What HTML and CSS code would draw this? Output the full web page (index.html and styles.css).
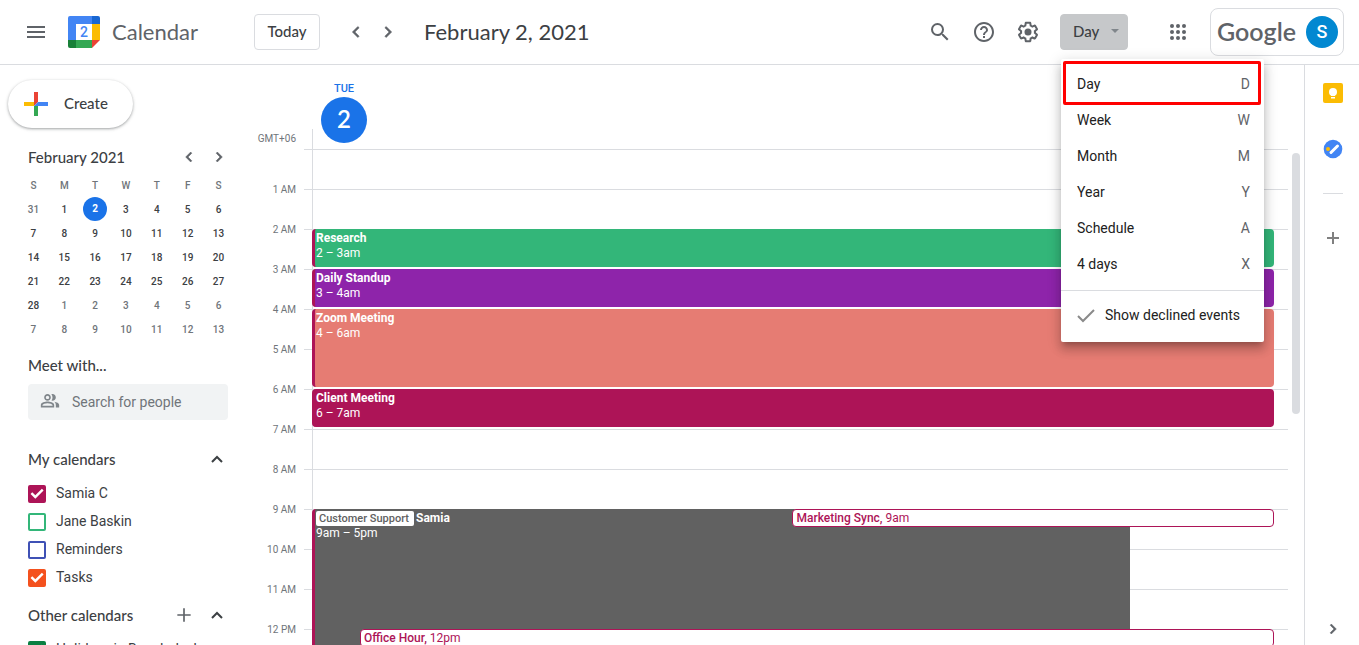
FILE: index.html
```html
<!DOCTYPE html>
<html lang="en">
<head>
    <meta charset="UTF-8">
    <meta name="viewport" content="width=device-width, initial-scale=1.0">
    <title>Calendar - February 2, 2021</title>
    <link rel="stylesheet" href="styles.css">
</head>
<body>
    <header class="topbar">
        <button class="icon-btn menu-btn" aria-label="Main menu">
            <svg width="24" height="24" viewBox="0 0 24 24"><path d="M3 18h18v-2H3v2zm0-5h18v-2H3v2zm0-7v2h18V6H3z"/></svg>
        </button>
        <a class="brand" href="#">
            <svg class="logo" width="32" height="32" viewBox="0 0 32 32">
                <rect x="7" y="7" width="18" height="18" fill="#fff"/>
                <path d="M2 0h22v8H8v16H0V2a2 2 0 0 1 2-2z" fill="#4285f4"/>
                <path d="M24 0h6a2 2 0 0 1 2 2v6h-8z" fill="#1967d2"/>
                <path d="M24 8h8v16h-8z" fill="#fbbc04"/>
                <path d="M8 24h16v8H8z" fill="#34a853"/>
                <path d="M0 24h8v8H2a2 2 0 0 1-2-2z" fill="#188038"/>
                <path d="M24 24h8l-8 8z" fill="#ea4335"/>
                <text class="logo-day" x="16" y="21" text-anchor="middle">2</text>
            </svg>
            <span class="brand-name">Calendar</span>
        </a>
        <button class="btn today-btn">Today</button>
        <div class="pager">
            <button class="icon-btn" aria-label="Previous day">
                <svg width="22" height="22" viewBox="0 0 24 24"><path d="M15.41 7.41 14 6l-6 6 6 6 1.41-1.41L10.83 12z" stroke="#5f6368" stroke-width=".6"/></svg>
            </button>
            <button class="icon-btn" aria-label="Next day">
                <svg width="22" height="22" viewBox="0 0 24 24"><path d="M10 6 8.59 7.41 13.17 12l-4.58 4.59L10 18l6-6z" stroke="#5f6368" stroke-width=".6"/></svg>
            </button>
        </div>
        <h1 class="date-title">February 2, 2021</h1>

        <div class="tools">
            <button class="icon-btn" aria-label="Search">
                <svg width="24" height="24" viewBox="0 0 24 24"><path d="M15.5 14h-.79l-.28-.27A6.47 6.47 0 0 0 16 9.5 6.5 6.5 0 1 0 9.5 16c1.61 0 3.09-.59 4.23-1.57l.27.28v.79l5 4.99L20.49 19l-4.99-5zm-6 0C7.01 14 5 11.99 5 9.5S7.01 5 9.5 5 14 7.01 14 9.5 11.99 14 9.5 14z"/></svg>
            </button>
            <button class="icon-btn" aria-label="Help">
                <svg width="24" height="24" viewBox="0 0 24 24"><path d="M11 18h2v-2h-2v2zm1-16C6.48 2 2 6.48 2 12s4.48 10 10 10 10-4.48 10-10S17.52 2 12 2zm0 18c-4.41 0-8-3.59-8-8s3.59-8 8-8 8 3.59 8 8-3.59 8-8 8zm0-14c-2.21 0-4 1.79-4 4h2c0-1.1.9-2 2-2s2 .9 2 2c0 2-3 1.75-3 5h2c0-2.25 3-2.5 3-5 0-2.21-1.79-4-4-4z"/></svg>
            </button>
            <button class="icon-btn" aria-label="Settings">
                <svg width="24" height="24" viewBox="0 0 24 24"><path d="M13.85 22.25h-3.7c-.74 0-1.36-.54-1.45-1.27l-.27-1.89c-.27-.14-.53-.29-.79-.46l-1.8.72c-.7.26-1.47-.03-1.81-.65L2.2 15.53c-.35-.66-.2-1.44.36-1.88l1.53-1.19c-.01-.15-.02-.3-.02-.46 0-.15.01-.31.02-.46l-1.52-1.19c-.59-.45-.74-1.26-.37-1.88l1.85-3.19c.34-.62 1.11-.9 1.79-.63l1.81.73c.26-.17.52-.32.78-.46l.27-1.91c.09-.7.71-1.25 1.44-1.25h3.7c.74 0 1.36.54 1.45 1.27l.27 1.89c.27.14.53.29.79.46l1.8-.72c.71-.26 1.48.03 1.82.65l1.84 3.18c.36.66.2 1.44-.36 1.88l-1.52 1.19c.01.15.02.3.02.46s-.01.31-.02.46l1.52 1.19c.56.45.72 1.23.37 1.86l-1.86 3.22c-.34.62-1.11.9-1.8.63l-1.8-.72c-.26.17-.52.32-.78.46l-.27 1.91c-.1.68-.72 1.22-1.46 1.22zm-3.23-2h2.76l.37-2.55.53-.22c.44-.18.88-.44 1.34-.78l.45-.34 2.38.96 1.38-2.4-2.03-1.58.07-.56c.03-.26.06-.51.06-.78s-.03-.53-.06-.78l-.07-.56 2.03-1.58-1.39-2.4-2.39.96-.45-.35c-.42-.32-.87-.58-1.33-.77l-.52-.22-.37-2.55h-2.76l-.37 2.55-.53.21c-.44.19-.88.44-1.34.79l-.45.33-2.38-.95-1.39 2.39 2.03 1.58-.07.56a7 7 0 0 0-.06.79c0 .26.02.53.06.78l.07.56-2.03 1.58 1.38 2.4 2.39-.96.45.35c.43.33.86.58 1.33.77l.53.22z"/><circle cx="12" cy="12" r="3.5"/></svg>
            </button>
            <div class="view-picker">
                <button class="btn view-btn" aria-haspopup="menu" aria-expanded="true">
                    Day
                    <svg width="8" height="4" viewBox="0 0 8 4"><path d="M0 0h8L4 4z" fill="#80868b"/></svg>
                </button>
                <div class="menu" role="menu">
                    <button class="menu-item marked" role="menuitem">Day <kbd>D</kbd></button>
                    <button class="menu-item" role="menuitem">Week <kbd>W</kbd></button>
                    <button class="menu-item" role="menuitem">Month <kbd>M</kbd></button>
                    <button class="menu-item" role="menuitem">Year <kbd>Y</kbd></button>
                    <button class="menu-item" role="menuitem">Schedule <kbd>A</kbd></button>
                    <button class="menu-item" role="menuitem">4 days <kbd>X</kbd></button>
                    <hr>
                    <button class="menu-item with-check" role="menuitemcheckbox" aria-checked="true">
                        <svg width="18" height="18" viewBox="0 0 18 18"><path d="M1 10l5 5L17 4" fill="none" stroke="#8a8a8a" stroke-width="2"/></svg>
                        Show declined events
                    </button>
                </div>
            </div>
            <button class="icon-btn apps-btn" aria-label="Google apps">
                <svg width="24" height="24" viewBox="0 0 24 24"><circle cx="6" cy="6" r="2"/><circle cx="12" cy="6" r="2"/><circle cx="18" cy="6" r="2"/><circle cx="6" cy="12" r="2"/><circle cx="12" cy="12" r="2"/><circle cx="18" cy="12" r="2"/><circle cx="6" cy="18" r="2"/><circle cx="12" cy="18" r="2"/><circle cx="18" cy="18" r="2"/></svg>
            </button>
            <a class="account" href="#">
                <span class="google">Google</span>
                <span class="avatar">S</span>
            </a>
        </div>
    </header>

    <div class="layout">
        <aside class="sidebar">
            <button class="create-btn">
                <svg width="24" height="24" viewBox="0 0 24 24">
                    <path d="M10 0h4v10l-4 4z" fill="#ea4335"/>
                    <path d="M0 10h10v4H0z" fill="#fbbc04"/>
                    <path d="M10 14h4v10h-4z" fill="#34a853"/>
                    <path d="M14 10h10v4H10z" fill="#4285f4"/>
                </svg>
                <span>Create</span>
            </button>

            <div class="month-head">
                <h2>February 2021</h2>
                <button class="icon-btn" aria-label="Previous month">
                    <svg width="20" height="20" viewBox="0 0 24 24"><path d="M15.41 7.41 14 6l-6 6 6 6 1.41-1.41L10.83 12z" stroke="#5f6368" stroke-width=".6"/></svg>
                </button>
                <button class="icon-btn" aria-label="Next month">
                    <svg width="20" height="20" viewBox="0 0 24 24"><path d="M10 6 8.59 7.41 13.17 12l-4.58 4.59L10 18l6-6z" stroke="#5f6368" stroke-width=".6"/></svg>
                </button>
            </div>
            <table class="month">
                <thead>
                    <tr><th>S</th><th>M</th><th>T</th><th>W</th><th>T</th><th>F</th><th>S</th></tr>
                </thead>
                <tbody>
                    <tr><td class="other">31</td><td>1</td><td><span class="current">2</span></td><td>3</td><td>4</td><td>5</td><td>6</td></tr>
                    <tr><td>7</td><td>8</td><td>9</td><td>10</td><td>11</td><td>12</td><td>13</td></tr>
                    <tr><td>14</td><td>15</td><td>16</td><td>17</td><td>18</td><td>19</td><td>20</td></tr>
                    <tr><td>21</td><td>22</td><td>23</td><td>24</td><td>25</td><td>26</td><td>27</td></tr>
                    <tr><td>28</td><td class="other">1</td><td class="other">2</td><td class="other">3</td><td class="other">4</td><td class="other">5</td><td class="other">6</td></tr>
                    <tr><td class="other">7</td><td class="other">8</td><td class="other">9</td><td class="other">10</td><td class="other">11</td><td class="other">12</td><td class="other">13</td></tr>
                </tbody>
            </table>

            <section class="people">
                <h2><label for="people">Meet with...</label></h2>
                <div class="search-box">
                    <svg width="20" height="20" viewBox="0 0 24 24"><path d="M9 10.500c2.200 0 4-1.800 4-4s-1.800-4-4-4-4 1.800-4 4 1.800 4 4 4zm0-6c1.100 0 2 .9 2 2s-.9 2-2 2-2-.9-2-2 .9-2 2-2zM9 11.500c-2.700 0-8 1.300-8 4v3h16v-3c0-2.700-5.300-4-8-4zm6 5H3v-1c.2-.7 3.300-2 6-2s5.800 1.300 6 2v1zM15 2.500c-.5 0-.9.1-1.300.2A6 6 0 0 1 15 6.500a6 6 0 0 1-1.300 3.800c.4.1.8.2 1.300.2 2.200 0 4-1.800 4-4s-1.800-4-4-4zM17 11.800c1.200.9 2 2.100 2 3.700v3h4v-3c0-2-3-3.200-6-3.700z" fill="#80868b"/></svg>
                    <input id="people" type="text" placeholder="Search for people">
                </div>
            </section>

            <section class="calendars">
                <div class="list-head">
                    <h2>My calendars</h2>
                    <button class="icon-btn" aria-label="Collapse my calendars">
                        <svg width="18" height="18" viewBox="0 0 18 18"><path d="M4 12l5-5 5 5" fill="none" stroke="#3c4043" stroke-width="2"/></svg>
                    </button>
                </div>
                <label class="cal"><input class="berry" type="checkbox" checked> Samia C</label>
                <label class="cal"><input class="green" type="checkbox"> Jane Baskin</label>
                <label class="cal"><input class="indigo" type="checkbox"> Reminders</label>
                <label class="cal"><input class="orange" type="checkbox" checked> Tasks</label>
            </section>

            <section class="calendars">
                <div class="list-head">
                    <h2>Other calendars</h2>
                    <button class="icon-btn" aria-label="Add other calendars">
                        <svg width="20" height="20" viewBox="0 0 24 24"><path d="M20 13h-7v7h-2v-7H4v-2h7V4h2v7h7v2z"/></svg>
                    </button>
                    <button class="icon-btn" aria-label="Collapse other calendars">
                        <svg width="18" height="18" viewBox="0 0 18 18"><path d="M4 12l5-5 5 5" fill="none" stroke="#3c4043" stroke-width="2"/></svg>
                    </button>
                </div>
                <label class="cal"><input class="forest" type="checkbox" checked> Holidays in Bangladesh</label>
            </section>
        </aside>

        <main class="day-view">
            <div class="day-head">
                <div class="zone">GMT+06</div>
                <div class="tick"></div>
                <div class="day">
                    <span class="day-name">TUE</span>
                    <span class="day-number">2</span>
                </div>
            </div>
            <div class="timeline">
                <div class="hours">
                    <span>1 AM</span>
                    <span>2 AM</span>
                    <span>3 AM</span>
                    <span>4 AM</span>
                    <span>5 AM</span>
                    <span>6 AM</span>
                    <span>7 AM</span>
                    <span>8 AM</span>
                    <span>9 AM</span>
                    <span>10 AM</span>
                    <span>11 AM</span>
                    <span>12 PM</span>
                </div>
                <div class="lines">
                    <div class="column">
                        <article class="event research"><b>Research</b><br>2 – 3am</article>
                        <article class="event standup"><b>Daily Standup</b><br>3 – 4am</article>
                        <article class="event zoom-meeting"><b>Zoom Meeting</b><br>4 – 6am</article>
                        <article class="event client"><b>Client Meeting</b><br>6 – 7am</article>
                        <article class="event support"><span class="tag">Customer Support</span><b>Samia</b><br>9am – 5pm</article>
                        <article class="event outline marketing"><b>Marketing Sync,</b> 9am</article>
                        <article class="event outline office"><b>Office Hour,</b> 12pm</article>
                    </div>
                </div>
                <div class="scrollbar"><div class="thumb"></div></div>
            </div>
        </main>

        <nav class="side-panel" aria-label="Side panel">
            <button class="icon-btn" aria-label="Keep">
                <svg width="20" height="20" viewBox="0 0 20 20"><rect width="20" height="20" rx="2" fill="#fbbc04"/><circle cx="10" cy="9" r="4" fill="#fff"/><path d="M8 11h4v2H8zM8 14h4v1.5H8z" fill="#fff"/></svg>
            </button>
            <button class="icon-btn" aria-label="Tasks">
                <svg width="20" height="20" viewBox="0 0 20 20"><circle cx="10" cy="10" r="9.3" fill="#4285f4"/><path d="M8 13.500 14.500 7" stroke="#fff" stroke-width="3" stroke-linecap="round"/><circle cx="5" cy="10" r="2" fill="#fbbc04"/></svg>
            </button>
            <hr>
            <button class="icon-btn" aria-label="Get add-ons">
                <svg width="20" height="20" viewBox="0 0 20 20"><path d="M9 4h2v5h5v2h-5v5H9v-5H4V9h5z" fill="#808080"/></svg>
            </button>
            <button class="icon-btn hide-panel" aria-label="Hide side panel">
                <svg width="20" height="20" viewBox="0 0 24 24"><path d="M10 6 8.59 7.41 13.17 12l-4.58 4.59L10 18l6-6z" stroke="#5f6368" stroke-width=".6"/></svg>
            </button>
        </nav>
    </div>
</body>
</html>
```
FILE: styles.css
```css
* {
    box-sizing: border-box;
}
body {
    margin: 0;
    height: 100vh;
    display: flex;
    flex-direction: column;
    overflow: hidden;
    background: #fff;
    color: #3c4043;
    font-family: Roboto, Arial, sans-serif;
    font-size: 14px;
}
button {
    font: inherit;
    color: inherit;
    cursor: pointer;
}
h1, h2 {
    margin: 0;
}
h2 {
    font: 500 15px/20px Lato, sans-serif;
}
a {
    color: inherit;
    text-decoration: none;
}
svg {
    display: block;
    flex: none;
}

.icon-btn {
    display: flex;
    align-items: center;
    justify-content: center;
    padding: 0;
    border: 0;
    background: none;
    fill: #5f6368;
}
.btn {
    display: flex;
    align-items: center;
    justify-content: center;
    height: 36px;
    padding: 0 0 2px;
    border: 1px solid #dadce0;
    border-radius: 4px;
    background: #fff;
    font: 500 15px Lato, sans-serif;
}

/* top bar */
.topbar {
    flex: none;
    display: flex;
    align-items: center;
    height: 65px;
    padding: 0 15px 1px 24px;
    border-bottom: 1px solid #dadce0;
}
.brand {
    display: flex;
    align-items: center;
    gap: 12px;
    width: 186px;
    margin-left: 20px;
}
.logo-day {
    font: 500 14px Roboto, sans-serif;
    fill: #4285f4;
}
.brand-name {
    font: 22px Lato, sans-serif;
    color: #5f6368;
}
.today-btn {
    width: 66px;
}
.pager {
    display: flex;
    gap: 10px;
    margin-left: 25px;
}
.date-title {
    margin-left: 25px;
    padding-bottom: 1px;
    font: 22px Lato, sans-serif;
}
.tools {
    display: flex;
    align-items: center;
    gap: 20px;
    margin-left: auto;
}
.view-picker {
    position: relative;
}
.view-btn {
    justify-content: space-between;
    width: 68px;
    padding: 0 8px 2px 12px;
    background: #c6c8ca;
    border-color: #c6c8ca;
}
.apps-btn {
    margin-left: 18px;
}
.account {
    display: flex;
    align-items: center;
    justify-content: space-between;
    width: 134px;
    height: 48px;
    padding: 0 5px 0 6px;
    border: 1px solid #dadce0;
    border-radius: 8px;
}
.google {
    padding-bottom: 2px;
    font: 600 25px Lato, sans-serif;
    color: #5f6368;
}
.avatar {
    display: flex;
    align-items: center;
    justify-content: center;
    width: 32px;
    height: 32px;
    border-radius: 50%;
    background: #0288d1;
    color: #fff;
    font-size: 18px;
    font-weight: 500;
}

/* view menu */
.menu {
    position: absolute;
    z-index: 2;
    top: 45px;
    left: 1px;
    width: 203px;
    padding: 7px 0 9px;
    border-radius: 2px;
    background: #fff;
    box-shadow: 0 8px 10px 1px rgba(0, 0, 0, .14), 0 3px 14px 2px rgba(0, 0, 0, .12), 0 5px 5px -3px rgba(0, 0, 0, .2);
}
.menu-item {
    position: relative;
    display: flex;
    align-items: center;
    justify-content: space-between;
    width: 100%;
    height: 36px;
    padding: 0 14px 0 16px;
    border: 0;
    background: none;
    color: #212121;
}
.menu-item kbd {
    font: inherit;
    color: #5f6368;
}
.menu-item.with-check {
    justify-content: flex-start;
    gap: 10px;
}
.menu hr {
    margin: 8px 0 6px;
    border: 0;
    border-top: 1px solid #dadce0;
}
.marked::after {
    content: "";
    position: absolute;
    inset: -5px 3px -3px 2px;
    border: 3px solid #f00;
    border-radius: 2px;
}

.layout {
    flex: 1;
    display: flex;
    min-height: 0;
}

/* sidebar */
.sidebar {
    flex: none;
    width: 256px;
    padding: 15px 28px 0;
    overflow: hidden;
}
.create-btn {
    display: flex;
    align-items: center;
    gap: 16px;
    height: 48px;
    margin-left: -20px;
    padding: 0 25px 0 16px;
    border: 0;
    border-radius: 24px;
    background: #fff;
    box-shadow: 0 1px 2px 0 rgba(60, 64, 67, .3), 0 1px 3px 1px rgba(60, 64, 67, .15);
    font: 500 15px Lato, sans-serif;
}
.create-btn span {
    padding-bottom: 2px;
}
.month-head, .list-head {
    display: flex;
    align-items: center;
}
.month-head {
    gap: 10px;
    height: 30px;
    margin: 14px -1px 0 0;
}
.month-head h2, .list-head h2 {
    flex: 1;
}
.month {
    width: 216px;
    margin: 1px -6px 0 -10px;
    border-collapse: collapse;
    table-layout: fixed;
    font-size: 10px;
    font-weight: 500;
    text-align: center;
}
.month th, .month td {
    height: 24px;
    padding: 0;
}
.month th, .month .other {
    font-weight: 500;
    color: #70757a;
}
.current {
    display: block;
    width: 24px;
    margin: 0 auto;
    border-radius: 50%;
    background: #1a73e8;
    color: #fff;
    font-weight: 700;
    line-height: 24px;
}
.people {
    padding-top: 14px;
}
.search-box {
    display: flex;
    align-items: center;
    gap: 12px;
    height: 36px;
    margin-top: 9px;
    padding: 0 12px;
    border-radius: 4px;
    background: #f1f3f4;
}
.search-box input {
    flex: 1;
    min-width: 0;
    padding: 0;
    border: 0;
    outline: 0;
    background: none;
    font: inherit;
}
.search-box input::placeholder {
    color: #70757a;
}
.people + .calendars {
    margin-top: 23px;
}
.list-head {
    gap: 14px;
    height: 32px;
    margin-right: 2px;
}
.calendars .list-head {
    margin-bottom: 4px;
}
.calendars + .calendars {
    margin-top: 8px;
}
.cal {
    display: flex;
    align-items: center;
    gap: 10px;
    height: 28px;
    white-space: nowrap;
}
.cal input {
    appearance: none;
    flex: none;
    display: grid;
    width: 18px;
    height: 18px;
    margin: 1px 0 0;
    border: 2px solid;
    border-radius: 2px;
}
.cal input:checked {
    background: currentColor;
}
.cal input:checked::before {
    content: "";
    background: #fff;
    clip-path: polygon(4% 53%, 16% 41%, 38% 63%, 85% 16%, 97% 28%, 38% 87%);
}
.berry { color: #ad1457; }
.green { color: #33b679; }
.indigo { color: #3f51b5; }
.orange { color: #f4511e; }
.forest { color: #0b8043; }

/* day view */
.day-view {
    flex: 1;
    display: flex;
    flex-direction: column;
    min-width: 0;
}
.day-head {
    flex: none;
    display: flex;
    align-items: flex-end;
    height: 84px;
}
.zone, .hours {
    flex: none;
    width: 40px;
    font-size: 10px;
    color: #70757a;
    text-align: right;
}
.zone {
    line-height: 20px;
}
.tick {
    width: 17px;
    height: 20px;
    border-right: 1px solid #dadce0;
}
.day {
    display: flex;
    flex-direction: column;
    align-items: center;
    margin-left: 8px;
    padding-bottom: 6px;
    color: #1a73e8;
}
.day-name {
    font-size: 11px;
    font-weight: 500;
    line-height: 16px;
}
.day-number {
    width: 46px;
    height: 46px;
    border-radius: 50%;
    background: #1a73e8;
    color: #fff;
    font: 600 24px/44px Lato, sans-serif;
    text-align: center;
}
.timeline {
    flex: 1;
    display: flex;
    min-height: 0;
    overflow: hidden;
}
.hours {
    display: flex;
    flex-direction: column;
    padding-top: 21px;
}
.hours span {
    flex: none;
    line-height: 40px;
}
.lines {
    flex: 1;
    margin-left: 8px;
    padding-left: 8px;
    background: repeating-linear-gradient(#dadce0 0 1px, transparent 1px 40px);
}
/* one row per hour, columns split where overlapping events start and end */
.column {
    display: grid;
    grid-template-columns: 5fr 45fr 35fr 15fr;
    grid-template-rows: repeat(24, 40px);
    padding-right: 14px;
    border-left: 1px solid #dadce0;
}
.event {
    min-width: 0;
    margin: 0 0 2px -1px;
    padding: 2px 1px 0;
    border-left: 3px solid #ad1457;
    border-radius: 4px;
    color: #fff;
    font-size: 12px;
    line-height: 15px;
    overflow: hidden;
}
.event b {
    font-weight: 700;
}
.research {
    grid-area: 3 / 1 / 4 / 5;
    background: #33b679;
}
.standup {
    grid-area: 4 / 1 / 5 / 5;
    background: #8e24aa;
}
.zoom-meeting {
    grid-area: 5 / 1 / 7 / 5;
    background: #e67c73;
}
.client {
    grid-area: 7 / 1 / 8 / 5;
    background: #ad1457;
}
.support {
    grid-area: 10 / 1 / 18 / 4;
    background: #616161;
}
.tag {
    display: inline-block;
    margin-right: 2px;
    padding: 0 5px 0 3px;
    border-radius: 2px;
    background: #fff;
    color: #616161;
    font-size: 11px;
    font-weight: 500;
}
.outline {
    align-self: start;
    height: 18px;
    padding: 0 3px;
    border: 1px solid #ad1457;
    background: #fff;
    color: #ad1457;
    line-height: 16px;
}
.outline b {
    font-weight: 500;
}
.marketing {
    grid-area: 10 / 3 / 11 / 5;
}
.office {
    grid-area: 13 / 2 / 14 / 5;
}
.scrollbar {
    flex: none;
    width: 16px;
    padding: 4px 4px 0;
}
.thumb {
    height: 261px;
    border-radius: 4px;
    background: #dadce0;
}

/* right panel */
.side-panel {
    flex: none;
    display: flex;
    flex-direction: column;
    align-items: center;
    width: 55px;
    padding: 18px 0 6px 1px;
    border-left: 1px solid #dadce0;
}
.side-panel .icon-btn + .icon-btn {
    margin-top: 36px;
}
.side-panel hr {
    width: 20px;
    margin: 34px 0;
    border: 0;
    border-top: 1px solid #dadce0;
}
.side-panel .icon-btn.hide-panel {
    margin-top: auto;
}
```
